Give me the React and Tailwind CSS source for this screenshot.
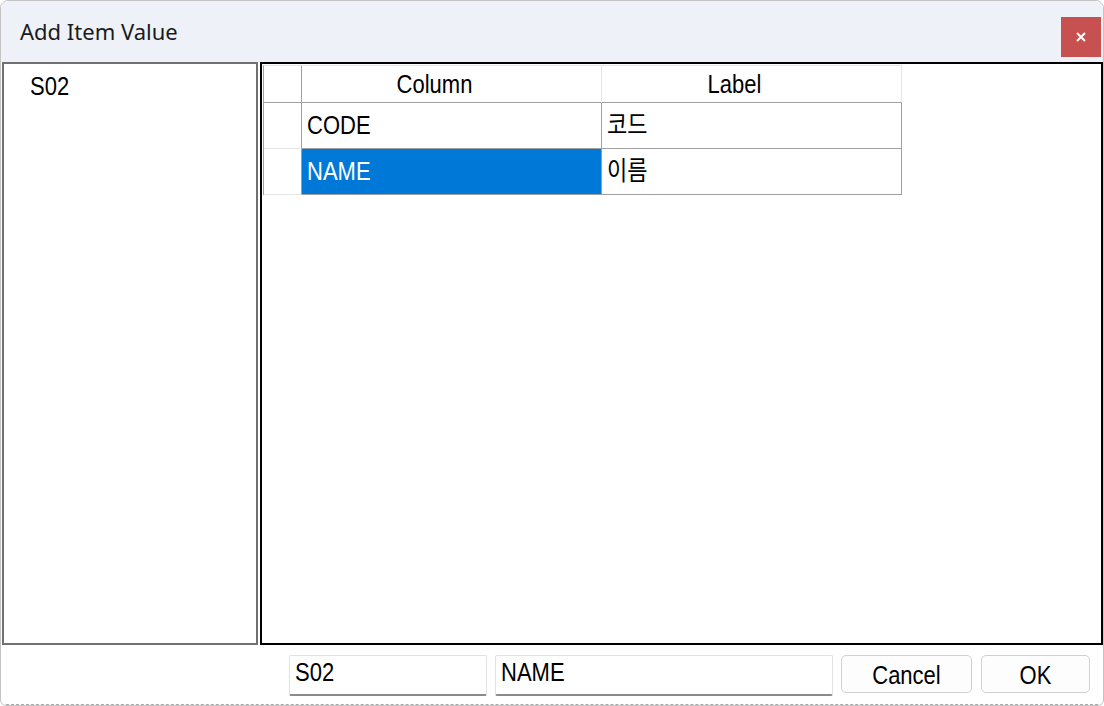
import React from "react";

const bm = { fontFamily: '"Liberation Sans", Arial, sans-serif' };
const kr = { fontFamily: '"Liberation Sans", "Noto Sans CJK KR", sans-serif' };

function T({ children, style = bm }) {
  return (
    <span className="inline-block scale-y-[1.2] origin-center" style={style}>
      {children}
    </span>
  );
}

function Cell({ children, className = "" }) {
  return <div className={"flex items-center border-r border-b " + className}>{children}</div>;
}

export default function App() {
  return (
    <div className="w-[1104px] h-[706px] bg-white overflow-hidden relative">
      <div className="w-[1104px] h-[706px] flex flex-col border border-[#c4c4c4] rounded-t-[8px] rounded-b-[6px] overflow-hidden">
        {/* Title bar */}
        <div className="h-[61px] shrink-0 bg-[#eef2f8] flex items-start justify-between pl-[19px] pr-[2px]">
          <span
            className="mt-[16px] text-[22px] leading-[28px] text-[#1a1a1a]"
            style={{ fontFamily: '"Noto Sans", "Open Sans", sans-serif' }}
          >
            Add Item Value
          </span>
          <div className="mt-[16px] w-[40px] h-[40px] bg-[#c75050] flex items-center justify-center">
            <svg width="10" height="10" viewBox="0 0 10 10">
              <path d="M1 1 L9 9 M9 1 L1 9" stroke="white" strokeWidth="2" />
            </svg>
          </div>
        </div>
        {/* Body */}
        <div className="flex h-[583px] shrink-0 pl-[1px]">
          <div className="w-[256px] shrink-0 border-2 border-[#707070] bg-white pl-[26px] pt-[8px]">
            <div className="text-[22px] text-black leading-[26px]">
              <T>S02</T>
            </div>
          </div>
          <div className="w-[843px] ml-[2px] shrink-0 border-2 border-black bg-white pl-[1px] pt-[1px]">
            <div className="grid grid-cols-[38px_300px_300px] grid-rows-[37px_46px_46px] border-l border-t border-l-[#a0a0a0] border-t-[#e4e4e4] w-fit text-[22px]">
              <Cell className="border-r-[#a0a0a0] border-b-[#a0a0a0]" />
              <Cell className="justify-center pr-[34px] border-r-[#e4e4e4] border-b-[#a0a0a0] text-black">
                <T>Column</T>
              </Cell>
              <Cell className="justify-center pr-[34px] border-r-[#e4e4e4] border-b-[#a0a0a0] text-black">
                <T>Label</T>
              </Cell>

              <Cell className="border-r-[#a0a0a0] border-b-[#e4e4e4]" />
              <Cell className="border-r-[#a0a0a0] border-b-[#a0a0a0] pl-[5px] text-black">
                <T>CODE</T>
              </Cell>
              <Cell className="border-r-[#a0a0a0] border-b-[#a0a0a0] pl-[5px] text-black">
                <T style={kr}>코드</T>
              </Cell>

              <Cell className="border-r-[#a0a0a0] border-b-[#e4e4e4]" />
              <Cell className="bg-[#0078d7] border-r-[#a0a0a0] border-b-[#a0a0a0] pl-[5px] text-white">
                <T>NAME</T>
              </Cell>
              <Cell className="border-r-[#a0a0a0] border-b-[#a0a0a0] pl-[5px] text-black">
                <T style={kr}>이름</T>
              </Cell>
            </div>
          </div>
        </div>
        {/* Footer */}
        <div className="flex-1 flex items-start pt-[10px] pl-[288px] gap-[8px] border-b border-dashed border-[#a8a8a8] text-[22px]">
          <div className="w-[198px] h-[41px] border border-[#e2e2e2] border-b-2 border-b-[#8a8a8a] rounded-[2px] pl-[5px] leading-[30px] text-black">
            <T>S02</T>
          </div>
          <div className="w-[338px] h-[41px] border border-[#e2e2e2] border-b-2 border-b-[#8a8a8a] rounded-[2px] pl-[5px] leading-[30px] text-black">
            <T>NAME</T>
          </div>
          <div className="w-[131px] h-[38px] border border-[#d0d0d0] rounded-[5px] bg-[#fdfdfd] flex items-center justify-center text-black">
            <T>Cancel</T>
          </div>
          <div className="w-[109px] h-[38px] ml-[1px] border border-[#d0d0d0] rounded-[5px] bg-[#fdfdfd] flex items-center justify-center text-black">
            <T>OK</T>
          </div>
        </div>
      </div>
    </div>
  );
}
